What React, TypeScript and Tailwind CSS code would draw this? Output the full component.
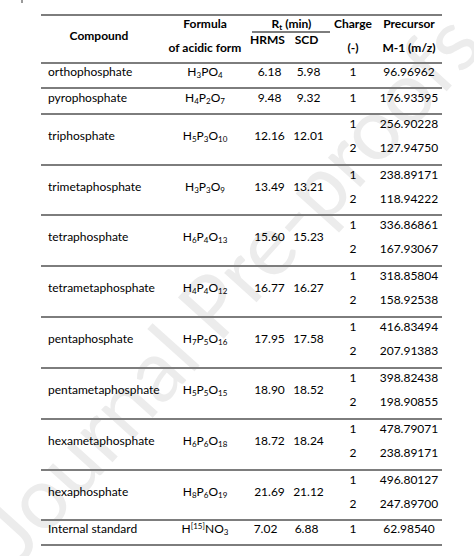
import React from "react";

const cols = "grid grid-cols-[119px_90px_37px_43px_46px_66px]";

function F({ parts }: { parts: (string | [string])[] }) {
  return (
    <span>
      {parts.map((p, i) =>
        typeof p === "string" ? (
          <span key={i}>{p}</span>
        ) : (
          <sub key={i} className="text-[8px] align-baseline relative top-[2px]">
            {p[0]}
          </sub>
        )
      )}
    </span>
  );
}

type Row = {
  name: string;
  formula: React.ReactNode;
  hrms: string;
  scd: string;
  ions: [string, string][];
  h: string;
};

const rows: Row[] = [
  { name: "orthophosphate", formula: <F parts={["H", ["3"], "PO", ["4"]]} />, hrms: "6.18", scd: "5.98", ions: [["1", "96.96962"]], h: "h-[25px]" },
  { name: "pyrophosphate", formula: <F parts={["H", ["4"], "P", ["2"], "O", ["7"]]} />, hrms: "9.48", scd: "9.32", ions: [["1", "176.93595"]], h: "h-[26px]" },
  { name: "triphosphate", formula: <F parts={["H", ["5"], "P", ["3"], "O", ["10"]]} />, hrms: "12.16", scd: "12.01", ions: [["1", "256.90228"], ["2", "127.94750"]], h: "h-[51px]" },
  { name: "trimetaphosphate", formula: <F parts={["H", ["3"], "P", ["3"], "O", ["9"]]} />, hrms: "13.49", scd: "13.21", ions: [["1", "238.89171"], ["2", "118.94222"]], h: "h-[50px]" },
  { name: "tetraphosphate", formula: <F parts={["H", ["6"], "P", ["4"], "O", ["13"]]} />, hrms: "15.60", scd: "15.23", ions: [["1", "336.86861"], ["2", "167.93067"]], h: "h-[51px]" },
  { name: "tetrametaphosphate", formula: <F parts={["H", ["4"], "P", ["4"], "O", ["12"]]} />, hrms: "16.77", scd: "16.27", ions: [["1", "318.85804"], ["2", "158.92538"]], h: "h-[51px]" },
  { name: "pentaphosphate", formula: <F parts={["H", ["7"], "P", ["5"], "O", ["16"]]} />, hrms: "17.95", scd: "17.58", ions: [["1", "416.83494"], ["2", "207.91383"]], h: "h-[51px]" },
  { name: "pentametaphosphate", formula: <F parts={["H", ["5"], "P", ["5"], "O", ["15"]]} />, hrms: "18.90", scd: "18.52", ions: [["1", "398.82438"], ["2", "198.90855"]], h: "h-[51px]" },
  { name: "hexametaphosphate", formula: <F parts={["H", ["6"], "P", ["6"], "O", ["18"]]} />, hrms: "18.72", scd: "18.24", ions: [["1", "478.79071"], ["2", "238.89171"]], h: "h-[51px]" },
  { name: "hexaphosphate", formula: <F parts={["H", ["8"], "P", ["6"], "O", ["19"]]} />, hrms: "21.69", scd: "21.12", ions: [["1", "496.80127"], ["2", "247.89700"]], h: "h-[50px]" },
];

function DataRow({ r }: { r: Row }) {
  const multi = r.ions.length > 1;
  const span = multi ? "row-span-2" : "";
  const cell = "flex items-center pb-[7px]";
  return (
    <div className={`${cols} ${multi ? "grid-rows-2" : "grid-rows-1"} ${r.h} border-t-2 border-[#7d7d7d]`}>
      <div className={`${cell} ${span} pl-[7px]`}>{r.name}</div>
      <div className={`${cell} ${span} justify-center`}>{r.formula}</div>
      <div className={`${cell} ${span} justify-center pl-[2px]`}>{r.hrms}</div>
      <div className={`${cell} ${span} justify-center`}>{r.scd}</div>
      {r.ions.map(([c, m], i) => (
        <React.Fragment key={i}>
          <div className={`${cell} justify-center col-start-5`}>{c}</div>
          <div className={`${cell} justify-center`}>{m}</div>
        </React.Fragment>
      ))}
    </div>
  );
}

export default function App() {
  return (
    <div
      className="relative w-[474px] h-[556px] bg-white overflow-hidden text-black text-[12px] leading-[16px]"
      style={{ fontFamily: "Lato, 'Open Sans', sans-serif" }}
    >
      <div className="absolute inset-0 flex items-center justify-center pointer-events-none">
        <div className="rotate-[-48deg] text-[86px] leading-none text-[#ececec] whitespace-nowrap translate-x-[-8px] translate-y-[6px]">
          Journal Pre-proofs
        </div>
      </div>
      <div className="relative">
        <div className="h-[14px] pl-[21px]">
          <div className="w-[2px] h-[3px] bg-[#9a9a9a]" />
        </div>
        <div className="ml-[41px] w-[401px] border-b-2 border-[#7d7d7d]">
          {/* header */}
          <div className={`${cols} h-[48px] border-t-2 border-[#7d7d7d] font-bold`}>
            <div className="flex items-center justify-center pb-[7px] pr-[3px]">Compound</div>
            <div className="flex flex-col items-center pt-[0px]">
              <div>Formula</div>
              <div className="mt-[8px]">of acidic form</div>
            </div>
            <div className="col-span-2 flex flex-col">
              <div className="h-[15px] flex justify-center pl-[3px]">
                <span>
                  R<sub className="text-[8px] align-baseline relative top-[2px] font-bold">t</sub> (min)
                </span>
              </div>
              <div className="ml-[2px] h-[2px] bg-[#7d7d7d]" />
              <div className="grid grid-cols-[35px_43px] -mt-[1px]">
                <div className="flex justify-center">HRMS</div>
                <div className="flex justify-center">SCD</div>
              </div>
            </div>
            <div className="flex flex-col items-center">
              <div>Charge</div>
              <div className="mt-[8px]">(-)</div>
            </div>
            <div className="flex flex-col items-center">
              <div>Precursor</div>
              <div className="mt-[8px]">M-1 (m/z)</div>
            </div>
          </div>
          {rows.map((r) => (
            <DataRow key={r.name} r={r} />
          ))}
          <div className={`${cols} h-[25px] border-t-2 border-[#7d7d7d]`}>
            <div className="flex items-center pb-[7px] pl-[7px]">Internal standard</div>
            <div className="flex items-center pb-[7px] justify-center">
              <span>
                H<sup className="text-[8px] align-baseline relative top-[-4px]">[15]</sup>NO
                <sub className="text-[8px] align-baseline relative top-[2px]">3</sub>
              </span>
            </div>
            <div className="flex items-center pb-[7px] justify-center pr-[6px]">7.02</div>
            <div className="flex items-center pb-[7px] justify-center pr-[4px]">6.88</div>
            <div className="flex items-center pb-[7px] justify-center">1</div>
            <div className="flex items-center pb-[7px] justify-center">62.98540</div>
          </div>
        </div>
      </div>
    </div>
  );
}
